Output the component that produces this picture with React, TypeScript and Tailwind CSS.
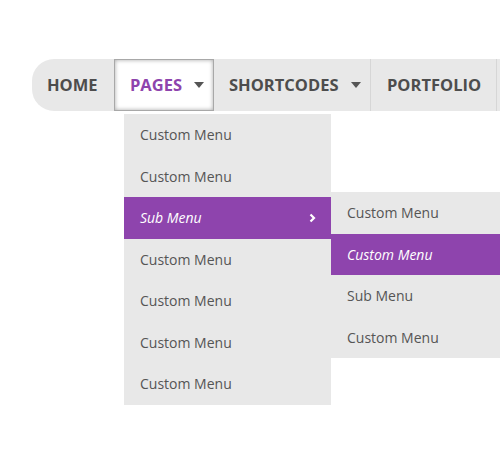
import React from "react";

const font = { fontFamily: '"Open Sans", "Noto Sans", sans-serif' };

function Caret() {
  return (
    <svg width="10" height="6" viewBox="0 0 10 6" className="ml-auto">
      <path d="M0 0 L10 0 L5 6 Z" fill="#555555" />
    </svg>
  );
}

function Chevron() {
  return (
    <svg width="7" height="10" viewBox="0 0 7 10">
      <path d="M1.5 1.5 L5 5 L1.5 8.5" stroke="#ffffff" strokeWidth="2.2" fill="none" />
    </svg>
  );
}

const item = "h-[41.5px] flex items-center px-4 text-[14px] text-[#555555]";
const active = "h-[41.5px] flex items-center justify-between px-4 pr-[15px] text-[14px] italic text-white bg-[#8e44ad]";

export default function App() {
  return (
    <div className="w-[500px] h-[472px] bg-white overflow-hidden" style={font}>
      <div className="pt-[59px] pl-[32px]">
        <nav className="relative flex h-[52px] w-[520px] bg-[#e8e8e8] rounded-l-[22px] text-[16.5px] font-bold uppercase text-[#4d4d4d]">
          <div className="flex items-center pl-[15px] w-[82px]">Home</div>
          <div className="relative flex items-center pl-[15px] pr-[9px] w-[100px] bg-white border border-[#a8a8a8] shadow-[inset_0_0_4px_rgba(0,0,0,0.35)] text-[#8e44ad]">
            Pages
            <Caret />
            <div className="absolute left-[9px] top-[54px] w-[207px] bg-[#e8e8e8] normal-case font-normal">
              <div className={item}>Custom Menu</div>
              <div className={item}>Custom Menu</div>
              <div className={`relative ${active}`}>
                Sub Menu
                <Chevron />
                <div className="absolute left-full top-[-5px] w-[200px] bg-[#e8e8e8] not-italic">
                  <div className={item}>Custom Menu</div>
                  <div className={`${active} italic`}>Custom Menu</div>
                  <div className={item}>Sub Menu</div>
                  <div className={item}>Custom Menu</div>
                </div>
              </div>
              <div className={item}>Custom Menu</div>
              <div className={item}>Custom Menu</div>
              <div className={item}>Custom Menu</div>
              <div className={item}>Custom Menu</div>
            </div>
          </div>
          <div className="flex items-center pl-[15px] pr-[9px] w-[157px] border-r border-[#d6d6d6]">
            Shortcodes
            <Caret />
          </div>
          <div className="flex items-center pl-[16px] w-[126px] border-r border-[#d6d6d6]">
            Portfolio
          </div>
        </nav>
      </div>
    </div>
  );
}
